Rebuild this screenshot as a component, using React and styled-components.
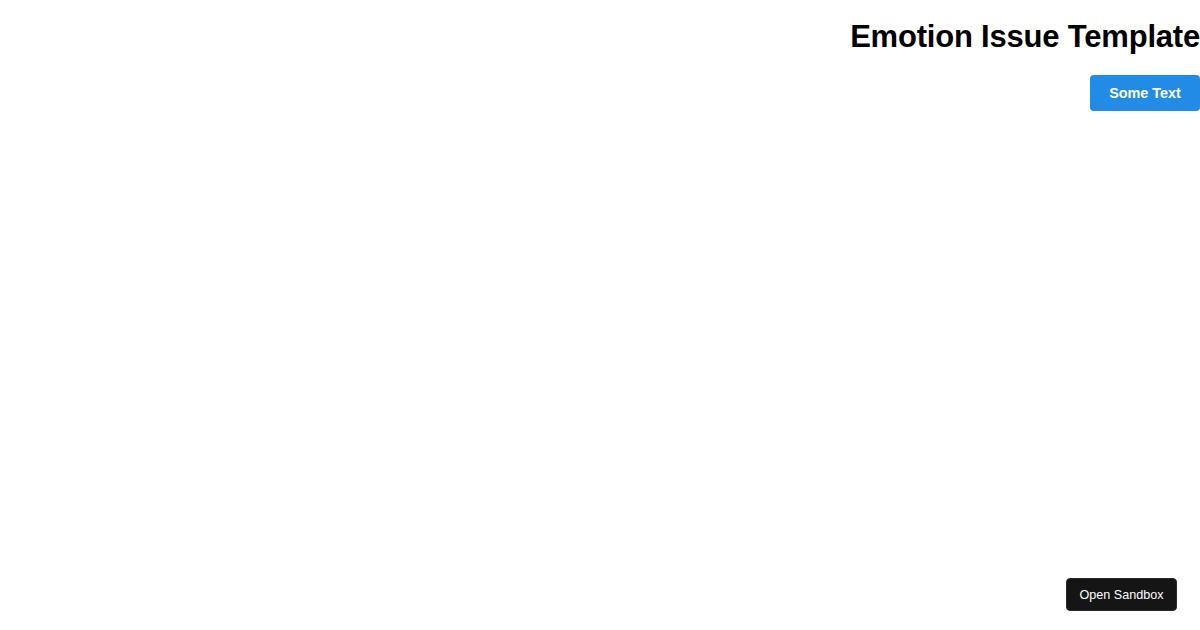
import React from 'react'
import styled, { createGlobalStyle } from 'styled-components'

const GlobalStyle = createGlobalStyle`
    html, body {
        margin: 0;
        padding: 0;
        background: #ffffff;
    }

    body {
        font-family: "Liberation Sans", Arial, sans-serif;
    }
`

const App = () => {
    return (
        <>
            <GlobalStyle />
            <PageStyled>
                <h1 className = 'title'>Emotion Issue Template</h1>
                <Button>Some Text</Button>
            </PageStyled>
            <SandboxLink>Open Sandbox</SandboxLink>
        </>
    )
}

export default App


const PageStyled = styled.div`
    display: flex;
    flex-direction: column;
    align-items: flex-end;
    text-align: right;

    .title {
        font-size: 31px;
        font-weight: 700;
        line-height: normal;
        letter-spacing: -0.2px;
        color: #000000;
        margin: 19px 0 20px;
    }
`

const Button = styled.button`
    font-family: "Liberation Sans", Arial, sans-serif;
    font-size: 14.4px;
    font-weight: 700;
    line-height: 16px;
    color: #ffffff;
    background: #228be6;
    border: none;
    border-radius: 4px;
    padding: 10px 18px;
    width: 110px;
    height: 36px;
    cursor: pointer;
`

const SandboxLink = styled.a`
    position: fixed;
    right: 23px;
    bottom: 19px;
    display: flex;
    align-items: center;
    justify-content: center;
    box-sizing: border-box;
    width: 111px;
    height: 33px;
    font-family: "Liberation Sans", Arial, sans-serif;
    font-size: 12.6px;
    color: #ffffff;
    background: #151515;
    border: 1px solid #2a2a2a;
    border-radius: 4px;
    text-decoration: none;
    cursor: pointer;
`
